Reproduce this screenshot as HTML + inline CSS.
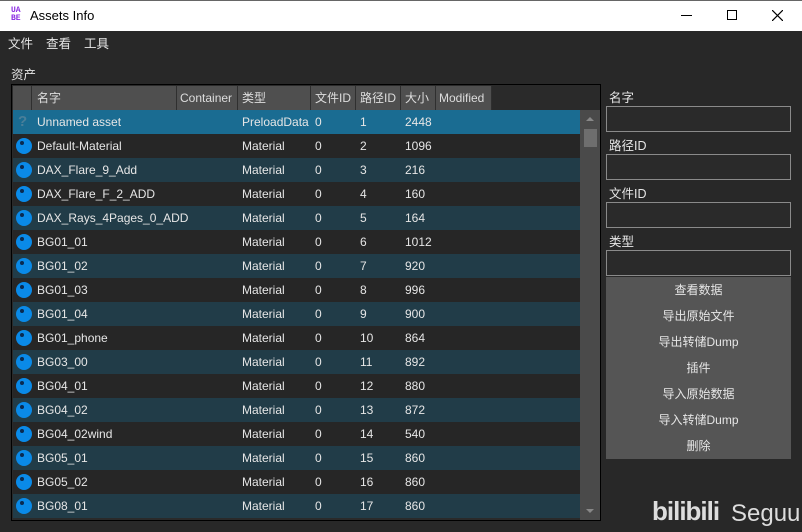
<!DOCTYPE html><html><head><meta charset="utf-8"><style>
*{margin:0;padding:0;box-sizing:border-box}
body{width:802px;height:532px;background:#282828;font-family:"Liberation Sans","Noto Sans CJK SC",sans-serif;font-size:12px;color:#e6e6e6;position:relative;overflow:hidden}
.a{position:absolute}
#tb{left:0;top:0;width:802px;height:31px;background:#fff;color:#000;border-top:1px solid #666}
.menu span{position:absolute;top:33px;font-size:12.5px}
#tbl{left:11px;top:84px;width:590px;height:437px;border:1px solid #000;background:#2a2a2a;overflow:hidden}
.hd{position:absolute;top:1px;height:24px;background:#4f4f4f;border-right:1px solid #2f2f2f;line-height:24px;padding-left:4px;font-size:12px;color:#ddd}
.row{position:absolute;left:1px;width:567px;height:24px;line-height:24px;font-size:12px}
.row span{position:absolute;top:0}
.ic{position:absolute;left:3px;top:4px;width:16px;height:16px;border-radius:50%;background:#0a8ae8}
.ic::after{content:"";position:absolute;left:4px;top:3px;width:4px;height:4px;border-radius:50%;background:#0a2a50}
.lbl{position:absolute;left:609px;font-size:12.5px}
.inp{position:absolute;left:606px;width:185px;height:26px;border:1px solid #8a8a8a;background:#2a2a2a}
.btn{position:absolute;left:606px;width:185px;height:26px;background:#555;text-align:center;line-height:26px;font-size:12px}
</style></head><body>
<div id="tb" class="a">
<div class="a" style="left:11px;top:6px;color:#8a2be2;font:bold 8px 'Liberation Mono',monospace;line-height:8px">UA<br>BE</div>
<div class="a" style="left:30px;top:7px;font-size:13px">Assets Info</div>
<div class="a" style="left:681px;top:14px;width:11px;height:1px;background:#000"></div>
<div class="a" style="left:727px;top:9px;width:10px;height:10px;border:1px solid #000"></div>
<svg class="a" style="left:772px;top:9px" width="11" height="11"><path d="M0 0L11 11M11 0L0 11" stroke="#000" stroke-width="1.2"/></svg>
</div>
<div class="menu"><span style="left:8px">文件</span><span style="left:46px">查看</span><span style="left:84px">工具</span></div>
<div class="a" style="left:11px;top:64px;font-size:12.5px">资产</div>
<div id="tbl" class="a">
<div class="hd" style="left:1px;width:19px"></div>
<div class="hd" style="left:20px;width:145px;padding-left:5px">名字</div>
<div class="hd" style="left:165px;width:61px;padding-left:3px">Container</div>
<div class="hd" style="left:226px;width:73px">类型</div>
<div class="hd" style="left:299px;width:45px">文件ID</div>
<div class="hd" style="left:344px;width:45px">路径ID</div>
<div class="hd" style="left:389px;width:35px">大小</div>
<div class="hd" style="left:424px;width:56px;padding-left:3px">Modified</div>
<div class="a" style="left:568px;top:25px;width:20px;height:411px;background:#4a4a4a"></div>
<div class="a" style="left:572px;top:44px;width:13px;height:18px;background:#6e6e6e"></div>
<div class="a" style="left:574px;top:32px;width:0;height:0;border-left:4px solid transparent;border-right:4px solid transparent;border-bottom:4px solid #888"></div>
<div class="a" style="left:574px;top:424px;width:0;height:0;border-left:4px solid transparent;border-right:4px solid transparent;border-top:4px solid #888"></div>
<div id="rows"></div>
</div>
<div class="lbl" style="top:87px">名字</div><div class="inp" style="top:106px"></div>
<div class="lbl" style="top:135px">路径ID</div><div class="inp" style="top:154px"></div>
<div class="lbl" style="top:183px">文件ID</div><div class="inp" style="top:202px"></div>
<div class="lbl" style="top:231px">类型</div><div class="inp" style="top:250px"></div>
<div class="a" style="left:606px;top:277px;width:185px;height:182px;background:#555"></div>
<div class="btn" style="top:277px">查看数据</div>
<div class="btn" style="top:303px">导出原始文件</div>
<div class="btn" style="top:329px">导出转储Dump</div>
<div class="btn" style="top:355px">插件</div>
<div class="btn" style="top:381px">导入原始数据</div>
<div class="btn" style="top:407px">导入转储Dump</div>
<div class="btn" style="top:433px">删除</div>
<div class="a" style="left:652px;top:496px;font:bold 26px 'Liberation Sans',sans-serif;color:#ddd;letter-spacing:-1px">bilibili</div>
<div class="a" style="left:731px;top:500px;font-size:24px;color:#ddd">Seguu</div>
<script>
var d=[["Unnamed asset","PreloadData",1,2448],["Default-Material","Material",2,1096],["DAX_Flare_9_Add","Material",3,216],["DAX_Flare_F_2_ADD","Material",4,160],["DAX_Rays_4Pages_0_ADD","Material",5,164],["BG01_01","Material",6,1012],["BG01_02","Material",7,920],["BG01_03","Material",8,996],["BG01_04","Material",9,900],["BG01_phone","Material",10,864],["BG03_00","Material",11,892],["BG04_01","Material",12,880],["BG04_02","Material",13,872],["BG04_02wind","Material",14,540],["BG05_01","Material",15,860],["BG05_02","Material",16,860],["BG08_01","Material",17,860]];
var h="";d.forEach(function(r,i){var bg=i==0?"#1a6c92":(i%2==0?"#213c48":"#262626");
h+='<div class="row" style="top:'+(25+24*i)+'px;background:'+bg+'">'+(i==0?'<span style="left:5px;color:#4a7f99;font-weight:bold;font-size:15px">?</span>':'<div class="ic"></div>')+'<span style="left:24px">'+r[0]+'</span><span style="left:229px">'+r[1]+'</span><span style="left:302px">0</span><span style="left:347px">'+r[2]+'</span><span style="left:392px">'+r[3]+'</span></div>';});
document.getElementById("rows").innerHTML=h;
</script>
</body></html>
